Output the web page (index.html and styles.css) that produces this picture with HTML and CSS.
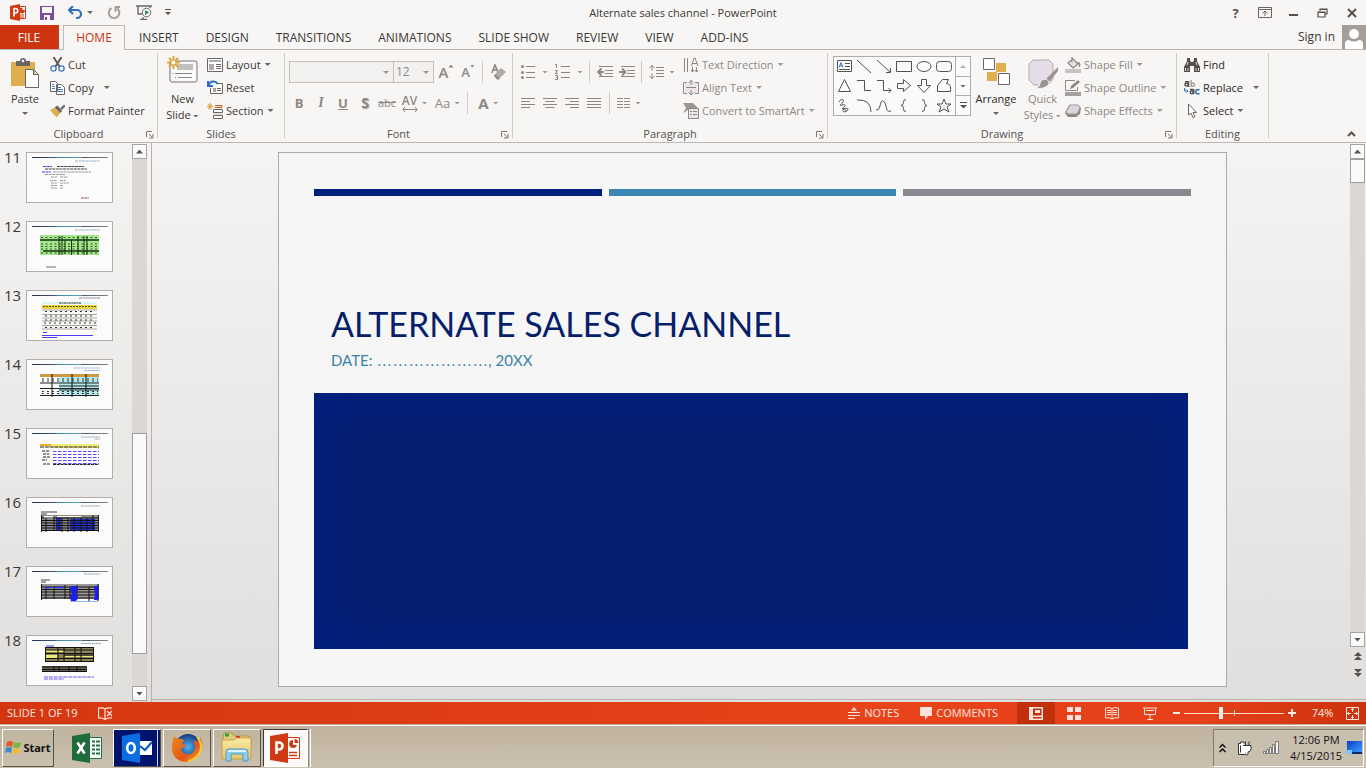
FILE: index.html
```html
<!DOCTYPE html>
<html lang="en">
<head>
<meta charset="utf-8">
<title>Alternate sales channel - PowerPoint</title>
<link rel="stylesheet" href="styles.css">
</head>
<body>
<svg class="defs" aria-hidden="true">
  <defs>
    <linearGradient id="rule" gradientUnits="userSpaceOnUse" x1="5" x2="81" y1="0" y2="0"><stop offset="0" stop-color="#2a2f45"/><stop offset=".3" stop-color="#3d5a78"/><stop offset=".34" stop-color="#3f88ac"/><stop offset=".64" stop-color="#5f9dba"/><stop offset=".67" stop-color="#555a60"/><stop offset="1" stop-color="#85858c"/></linearGradient>
    <radialGradient id="globe"><stop offset="0" stop-color="#4fb4e8"/><stop offset="1" stop-color="#123a86"/></radialGradient>
    <linearGradient id="fox" x1="0" y1="0" x2="1" y2="1"><stop offset="0" stop-color="#f08a1c"/><stop offset=".6" stop-color="#e2561a"/><stop offset="1" stop-color="#f9c12a"/></linearGradient>
    <linearGradient id="folder" x1="0" y1="0" x2="0" y2="1"><stop offset="0" stop-color="#f8eaa4"/><stop offset="1" stop-color="#e6c765"/></linearGradient>
    <linearGradient id="screen" x1="0" y1="0" x2="1" y2="1"><stop offset="0" stop-color="#0a3fc4"/><stop offset="1" stop-color="#3a9cff"/></linearGradient>
    <symbol id="launcher" viewBox="0 0 8 8"><path d="M.5 6V.5H6M3 3l3 3M7 3v4H3" fill="none" stroke="currentColor"/></symbol>
    <symbol id="lines" viewBox="0 0 14 12"><path d="M0 1.500h14M0 4.500h9M0 7.500h14M0 10.500h9" stroke="currentColor" fill="none"/></symbol>
    <symbol id="head" viewBox="0 0 85 49"><path fill="url(#rule)" d="M5 4h76v1H5z"/></symbol>
  </defs>
</svg>

<header class="titlebar">
  <div class="quick">
    <svg class="app" width="17" height="17" viewBox="0 0 17 17"><path fill="#fff" stroke="#cf3a14" d="M9 2.500h6.500v12H9z"/><path d="M12 4a2.500 2.500 0 1 0 2.500 2.500H12zM9 11h5M9 13h5" fill="#cf3a14" stroke="#cf3a14"/><path fill="#cf3a14" d="M0 2l10-2v17L0 15z"/><path d="M4 12.500v-8h1.500a2.200 2.200 0 0 1 0 4.500H4" fill="none" stroke="#fff" stroke-width="1.600"/></svg>
    <button class="q-save" aria-label="Save"><svg width="14" height="14" viewBox="0 0 14 14"><path fill="#7c4a9e" d="M0 0h14v14H0z"/><path fill="#f7f6f5" d="M2 1h10v6H2zM4 9h6v5H4z"/><path fill="#7c4a9e" d="M5 11h2v3H5z"/></svg></button>
    <button class="q-undo" aria-label="Undo"><svg width="15" height="13" viewBox="0 0 15 13"><path d="M5 0L1 4l4 4M1.500 4H9a4 4 0 0 1 0 8H8" fill="none" stroke="#2f6fc1" stroke-width="2.200"/></svg><i class="caret"></i></button>
    <button class="q-redo" aria-label="Repeat"><svg width="14" height="14" viewBox="0 0 14 14"><path d="M4.500 2.200A5.300 5.300 0 1 0 10 2.400" fill="none" stroke="#a39f9c" stroke-width="2"/><path d="M8.500 6V1H13" fill="none" stroke="#a39f9c" stroke-width="2"/></svg></button>
    <button class="q-show" aria-label="Start from beginning"><svg width="17" height="15" viewBox="0 0 17 15"><path d="M0 1h16M2 1v8h4M14 1v2M7 12v2M4 14.500h7" fill="none" stroke="#6b6866" stroke-width="1.400"/><circle cx="10.500" cy="7.500" r="4.300" fill="#f7f6f5" stroke="#6b6866"/><path fill="#2e8b57" d="M9 5l4 2.500L9 10z"/></svg></button>
    <button class="q-more" aria-label="Customize"><svg width="6" height="7" viewBox="0 0 6 7"><path d="M0 .5h6" stroke="#55514f"/><path d="M0 3h6L3 6z" fill="#55514f"/></svg></button>
  </div>
  <div class="doc-title">Alternate sales channel - PowerPoint</div>
  <div class="winbtns">
    <button aria-label="Help" class="help">?</button>
    <button aria-label="Ribbon display options"><svg width="14" height="11" viewBox="0 0 14 11"><path d="M.5.5h13v10H.5zM0 2.500h14M7 9V5M4.500 6.500L7 4l2.500 2.500" fill="none" stroke="#6a6664"/></svg></button>
    <button aria-label="Minimize"><svg width="10" height="10" viewBox="0 0 10 10"><path d="M0 7h9" stroke="#55514f" stroke-width="2"/></svg></button>
    <button aria-label="Restore"><svg width="11" height="10" viewBox="0 0 11 10"><path d="M3 3V1h7v5H8M1 4h7v5H1zM1 4.500h7M3 1.500h7" fill="none" stroke="#55514f" stroke-width="1.200"/></svg></button>
    <button aria-label="Close"><svg width="10" height="10" viewBox="0 0 10 10"><path d="M1 1l8 8M9 1L1 9" stroke="#55514f" stroke-width="2"/></svg></button>
  </div>
</header>

<nav class="tabs">
  <button class="file">FILE</button>
  <button class="active">HOME</button>
  <button>INSERT</button>
  <button>DESIGN</button>
  <button>TRANSITIONS</button>
  <button>ANIMATIONS</button>
  <button>SLIDE SHOW</button>
  <button>REVIEW</button>
  <button>VIEW</button>
  <button>ADD-INS</button>
  <a class="signin" href="#">Sign in
    <svg width="24" height="24" viewBox="0 0 24 24"><path fill="#a59d98" d="M0 0h24v24H0z"/><circle cx="12" cy="9" r="5" fill="#fff"/><path fill="#fff" d="M3 24v-5q0-4 4-4 5 3 10 0 4 0 4 4v5z"/></svg>
  </a>
</nav>

<section class="ribbon">
  <div class="group g-clip">
    <div class="gbody">
      <button class="big paste"><svg width="30" height="31" viewBox="0 0 30 31"><path fill="#dfae4e" d="M1 4h24v24H1z"/><path fill="#6a6664" d="M6 3h4a3 3 0 0 1 6 0h4v5H6z"/><circle cx="13" cy="3" r="1.300" fill="#fff"/><path fill="#fff" stroke="#6a6664" d="M15.500 11.500h8l5 5v13h-13zM23.500 11.500v5h5"/></svg><span>Paste</span><i class="caret"></i></button>
      <div class="rows">
        <button><svg width="15" height="15" viewBox="0 0 15 15"><path d="M3.500 0l6 9.500M11.500 0l-6 9.500" stroke="#5f5b59" stroke-width="2"/><circle cx="3.500" cy="11.500" r="2.600" fill="none" stroke="#3a78c3" stroke-width="1.300"/><circle cx="11.500" cy="11.500" r="2.600" fill="none" stroke="#3a78c3" stroke-width="1.300"/></svg>Cut</button>
        <button><svg width="15" height="14" viewBox="0 0 15 14"><path fill="#fff" stroke="#6a6664" d="M.5.5h5l2 2v8h-7zM6.500 3.500h5l3 3v7h-8z"/><path d="M2 3.500h2M2 5.500h3M2 7.500h3M8 6.500h3M8 8.500h5M8 10.500h5" stroke="#3a78c3"/></svg>Copy<i class="caret wide"></i></button>
        <button><svg width="15" height="14" viewBox="0 0 16 14"><path fill="#dfae4e" d="M0 6l6-3 5 6-4 5z"/><path fill="#6a6664" d="M5 3l3-2 5 6-2 2zM11 4l4-4 1.500 2-4 4z"/></svg>Format Painter</button>
      </div>
    </div>
    <div class="glabel">Clipboard<button aria-label="Clipboard options"><svg><use href="#launcher"/></svg></button></div>
  </div>

  <div class="group g-slides">
    <div class="gbody">
      <button class="big"><svg width="31" height="28" viewBox="0 0 31 28"><rect x="3" y="5" width="27" height="21" rx="2" fill="#fbfafa" stroke="#77716e"/><path fill="#c3bfbe" d="M10 8h16v6H10z"/><path d="M8 17.500h17M8 21.500h1M11 21.500h14M5.500 17.500h1" stroke="#8b8784"/><path d="M6.500 0v13M0 6.500h13M2 2l9 9M11 2l-9 9" stroke="#dca63c" stroke-width="2"/><circle cx="6.500" cy="6.500" r="2" fill="#fff"/></svg><span>New<br>Slide<i class="caret"></i></span></button>
      <div class="rows">
        <button><svg width="16" height="14" viewBox="0 0 16 14"><path d="M.5.5h15v13H.5z" fill="#fff" stroke="#6a6664"/><path fill="#8d8886" d="M2 2h12v2H2zM2 6h5v6H2z" opacity=".7"/><path d="M9 6.500h5M9 8.500h5M9 10.500h5" stroke="#6a6664"/></svg>Layout<i class="caret"></i></button>
        <button><svg width="16" height="15" viewBox="0 0 16 15"><path d="M4.500 13.500h11v-10h-5M3.500 8v5.500h2" fill="#fff" stroke="#6a6664"/><path d="M6 8h3v4H6z" fill="#a9a5a3"/><path d="M10 8.500h4M10 10.500h4" stroke="#6a6664"/><path d="M1 1v5h5M1.500 5.500C3 1 8 0 11 4" fill="none" stroke="#2f6fc1" stroke-width="2"/></svg>Reset</button>
        <button><svg width="16" height="16" viewBox="0 0 16 16"><path d="M3 0v7M0 3.500h6M1 1l4 5M5 1L1 6" stroke="#e0a03c"/><path d="M8 2.500h7v2H8" fill="none" stroke="#cf5a1c"/><path fill="#fff" stroke="#6a6664" d="M6.500 6.500h9v3h-9zM6.500 12.500h9v3h-9z"/><path d="M6 11h10" stroke="#c9c5c3"/></svg>Section<i class="caret"></i></button>
      </div>
    </div>
    <div class="glabel">Slides</div>
  </div>

  <div class="group g-font dim">
    <div class="gbody stack">
      <div class="line">
        <label class="combo face"><select aria-label="Font"><option></option></select></label>
        <label class="combo size"><select aria-label="Font size"><option>12</option></select></label>
        <button class="ib" aria-label="Increase font size"><span class="a1">A</span><i class="up"></i></button>
        <button class="ib" aria-label="Decrease font size"><span class="a2">A</span><i class="dn"></i></button>
        <i class="vsep"></i>
        <button class="ib clear" aria-label="Clear formatting"><svg width="15" height="16" viewBox="0 0 15 16"><path d="M1 9L4 1l3 7M2 6h4" fill="none" stroke="currentColor" stroke-width="1.600"/><path d="M4 10l6-6 5 4-6 6z" fill="#b0a9a6"/><path d="M4 10l5 4-1 1.500H6L3 12z" fill="#8d8783"/></svg></button>
      </div>
      <div class="line l2">
        <button class="ib"><b>B</b></button><button class="ib serif">I</button><button class="ib und"><b>U</b></button><button class="ib shad"><b>S</b></button><button class="ib abc">abc</button>
        <button class="ib w32"><span class="av">AV<svg width="16" height="5" viewBox="0 0 16 5"><path d="M1 2.500h14M3 0L.8 2.500 3 5M13 0l2.200 2.500L13 5" fill="none" stroke="currentColor"/></svg></span><i class="caret"></i></button>
        <button class="ib w32"><span>Aa</span><i class="caret"></i></button>
        <i class="vsep"></i>
        <button class="ib w32 fc"><b>A</b><i class="caret"></i></button>
      </div>
    </div>
    <div class="glabel">Font<button aria-label="Font options"><svg><use href="#launcher"/></svg></button></div>
  </div>

  <div class="group g-para dim">
    <div class="gbody">
      <div class="stack">
        <div class="line">
          <button class="ib w32" aria-label="Bullets"><svg width="14" height="14" viewBox="0 0 14 14"><path d="M5 1.500h9M5 7.500h9M5 12.500h9" stroke="currentColor"/><circle cx="1.500" cy="1.500" r="1.500" fill="currentColor"/><circle cx="1.500" cy="7.500" r="1.500" fill="currentColor"/><circle cx="1.500" cy="12.500" r="1.500" fill="currentColor"/></svg><i class="caret"></i></button>
          <button class="ib w32" aria-label="Numbering"><svg width="15" height="16" viewBox="0 0 15 16"><path d="M6 2.500h9M6 8.500h9M6 13.500h9M0 .5h1.500V4M0 6.500h2.500L.5 9.500H3M0 11.500h2.500v4H0M1 13.500h1" fill="none" stroke="currentColor"/></svg><i class="caret"></i></button>
          <i class="vsep"></i>
          <button class="ib" aria-label="Decrease indent"><svg width="16" height="12" viewBox="0 0 16 12"><path d="M2 .5h14M8 4.500h8M8 7.500h8M2 10.500h14" stroke="currentColor"/><path d="M4.500 2.500L1 6l3.500 3.500M1 6h6" fill="none" stroke="currentColor" stroke-width="1.800"/></svg></button>
          <button class="ib" aria-label="Increase indent"><svg width="16" height="12" viewBox="0 0 16 12"><path d="M2 .5h14M8 4.500h8M8 7.500h8M2 10.500h14" stroke="currentColor"/><path d="M3 2.500L6.500 6 3 9.500M0 6h6" fill="none" stroke="currentColor" stroke-width="1.800"/></svg></button>
          <i class="vsep"></i>
          <button class="ib w32" aria-label="Line spacing"><svg width="15" height="16" viewBox="0 0 15 16"><path d="M7 3.500h8M7 6.500h8M7 9.500h8M7 12.500h8M3 1v14M.5 4L3 1.500 5.500 4M.5 12L3 14.500 5.500 12" fill="none" stroke="currentColor"/><path d="M2 7h2v2H2z" fill="#f7f6f5"/></svg><i class="caret"></i></button>
        </div>
        <div class="line l2 aligns">
          <button class="ib" aria-label="Align left"><svg width="14" height="12"><use href="#lines"/></svg></button>
          <button class="ib" aria-label="Center"><svg width="14" height="12" viewBox="0 0 14 12"><path d="M0 1.500h14M2.500 4.500h9M0 7.500h14M2.500 10.500h9" stroke="currentColor"/></svg></button>
          <button class="ib" aria-label="Align right"><svg width="14" height="12" viewBox="0 0 14 12"><path d="M0 1.500h14M5 4.500h9M0 7.500h14M5 10.500h9" stroke="currentColor"/></svg></button>
          <button class="ib" aria-label="Justify"><svg width="14" height="12" viewBox="0 0 14 12"><path d="M0 1.500h14M0 4.500h14M0 7.500h14M0 10.500h14" stroke="currentColor"/></svg></button>
          <i class="vsep"></i>
          <button class="ib w32" aria-label="Columns"><svg width="13" height="12" viewBox="0 0 13 12"><path d="M0 1.500h6M7 1.500h6M0 4.500h6M7 4.500h6M0 7.500h6M7 7.500h6M0 10.500h6M7 10.500h6" stroke="currentColor"/></svg><i class="caret"></i></button>
        </div>
      </div>
      <div class="rows">
        <button><svg width="16" height="16" viewBox="0 0 16 16"><path d="M1.500 1v14M4.500 1v14M9.500 10v5M13.500 10v5M8 13l1.500 2 1.500-2M12 13l1.500 2 1.500-2M8.500 9l2.500-8h1l3 8M9 6.500h5" fill="none" stroke="currentColor"/></svg>Text Direction<i class="caret"></i></button>
        <button><svg width="16" height="16" viewBox="0 0 16 16"><path fill="#ece4ea" d="M2 3h12v10H2z"/><path d="M4 2.500H.5v11H4M12 2.500h3.500v11H12M3 7.500h10M8 0v5M8 10v5M5.500 3L8 .5 10.500 3M5.500 12.500L8 15l2.500-2.500" fill="none" stroke="currentColor"/></svg>Align Text<i class="caret"></i></button>
        <button><svg width="16" height="16" viewBox="0 0 16 16"><path d="M0 0h10l4 4v3H5l-5 3 3-5z" fill="#9d9794"/><path fill="#ece4ea" stroke="currentColor" d="M5.500 5.500h10v10h-10z"/><path d="M7 8.500h2M10 8.500h4M7 11.500h2M10 11.500h4" stroke="currentColor"/></svg>Convert to SmartArt<i class="caret"></i></button>
      </div>
    </div>
    <div class="glabel">Paragraph<button aria-label="Paragraph options"><svg><use href="#launcher"/></svg></button></div>
  </div>

  <div class="group g-draw">
    <div class="gbody">
      <div class="gallery">
        <div class="cells">
          <button aria-label="Text box"><svg viewBox="0 0 20 19"><path d="M3.500 3.500h14v11h-14zM11 6.500h5M11 9.500h5M5 12.500h11" fill="#fff"/><path d="M5 10.500l2-5 2 5M6 9h2" stroke="#2f6fc1"/></svg></button>
          <button aria-label="Line"><svg viewBox="0 0 20 19"><path d="M3 3l14 13"/></svg></button>
          <button aria-label="Arrow"><svg viewBox="0 0 20 19"><path d="M3 3l13 12M16.500 11v4.500H12"/></svg></button>
          <button aria-label="Rectangle"><svg viewBox="0 0 20 19"><path d="M2.500 4.500h15v10h-15z"/></svg></button>
          <button aria-label="Oval"><svg viewBox="0 0 20 19"><ellipse cx="10" cy="9.500" rx="7" ry="5"/></svg></button>
          <button aria-label="Rounded rectangle"><svg viewBox="0 0 20 19"><rect x="2.500" y="4.500" width="15" height="10" rx="3"/></svg></button>
          <button aria-label="Triangle"><svg viewBox="0 0 20 19"><path d="M10.500 3.500l6 12h-12z"/></svg></button>
          <button aria-label="Elbow"><svg viewBox="0 0 20 19"><path d="M3 4.500h7.500v10H17"/></svg></button>
          <button aria-label="Elbow arrow"><svg viewBox="0 0 20 19"><path d="M3 4.500h6.500v10H17M14.500 12l2.500 2.500-2.500 2.500"/></svg></button>
          <button aria-label="Right arrow"><svg viewBox="0 0 20 19"><path d="M3.500 7.500h6v-4l7 6-7 6v-3h-6z"/></svg></button>
          <button aria-label="Down arrow"><svg viewBox="0 0 20 19"><path d="M7.500 3.500h5v6h4l-6.500 7-6.500-7h4z"/></svg></button>
          <button aria-label="Freeform"><svg viewBox="0 0 20 19"><path d="M3.500 15.500v-6l5-6h6l-2 4q5 0 4 8z"/></svg></button>
          <button aria-label="Scribble"><svg viewBox="0 0 20 19"><path d="M5 6c2-4 6-3 4 0s-5 4-1 3 4 1 1 3 5-1 5 1-4 4-5 2 2-3 3 0"/></svg></button>
          <button aria-label="Arc"><svg viewBox="0 0 20 19"><path d="M3 4q14-1 14 12"/></svg></button>
          <button aria-label="Curve"><svg viewBox="0 0 20 19"><path d="M2 14q3 1 4-4c1-7 4-7 6 0 1 5 2 6 5 5"/></svg></button>
          <button aria-label="Left brace"><svg viewBox="0 0 20 19"><path d="M12 3.500q-3 0-2.500 3 0 3-2.500 3 2.500 0 2.500 3-.5 3 2.500 3"/></svg></button>
          <button aria-label="Right brace"><svg viewBox="0 0 20 19"><path d="M8 3.500q3 0 2.500 3 0 3 2.500 3-2.500 0-2.500 3 .5 3-2.500 3"/></svg></button>
          <button aria-label="Star"><svg viewBox="0 0 20 19"><path d="M10 3l2 5h5l-4 3 2 5-5-3-5 3 2-5-4-3h5z"/></svg></button>
        </div>
        <div class="gscroll">
          <button aria-label="Scroll up"><i class="caret flip"></i></button>
          <button aria-label="Scroll down"><i class="caret"></i></button>
          <button aria-label="More shapes"><svg width="7" height="7" viewBox="0 0 7 7"><path d="M0 .5h7" stroke="#55514f"/><path d="M0 3h7L3.500 6.500z" fill="#55514f"/></svg></button>
        </div>
      </div>
      <button class="big arrange"><svg width="27" height="28" viewBox="0 0 27 28"><path fill="#dfae4e" d="M13 5h10v9h-9v9H4v-9h9z"/><path fill="#fff" stroke="#6a6664" d="M.5.5h11v11H.5zM15.500 15.500h11v11h-11z"/></svg><span>Arrange</span><i class="caret"></i></button>
      <button class="big quick-styles off"><svg width="30" height="30" viewBox="0 0 30 30"><path d="M5 1h16l4 4v15l-5 6H6l-5-5V5z" fill="#e6dce8" stroke="#b3aab2"/><path d="M30 8L18 20l3 3 9-11z" fill="#9a9491"/><path d="M16 20q5 0 5 5-5 6-13 4 5-2 4-5 0-3 4-4z" fill="#9a9491" stroke="#f7f6f5"/></svg><span>Quick<br>Styles<i class="caret"></i></span></button>
      <div class="rows off">
        <button><svg width="16" height="16" viewBox="0 0 16 16"><path fill="#c9c2c6" d="M0 12h16v4H0z"/><path d="M3 6l5-4 5 5-5 4zM7 0v5M13 5q3 2 1 5" fill="#eadfe6" stroke="currentColor" stroke-width="1.300"/></svg>Shape Fill<i class="caret"></i></button>
        <button><svg width="16" height="16" viewBox="0 0 16 16"><path fill="#a79ea2" d="M0 12h16v4H0z"/><path d="M10 .5H.5v10h12V7" fill="none" stroke="currentColor"/><path d="M5 9l1-3 7-6 2 2-7 6z" fill="currentColor"/></svg>Shape Outline<i class="caret"></i></button>
        <button><svg width="16" height="14" viewBox="0 0 16 14"><path d="M4 1h9l3 3-1 6-4 3H3L0 9z" fill="#8d8783"/><path d="M5 1h8l2 3-3 6H3L1 8z" fill="#ded4dc" stroke="#9d9794"/></svg>Shape Effects<i class="caret"></i></button>
      </div>
    </div>
    <div class="glabel">Drawing<button class="off" aria-label="Drawing options"><svg><use href="#launcher"/></svg></button></div>
  </div>

  <div class="group g-edit">
    <div class="gbody">
      <div class="rows">
        <button><svg width="16" height="14" viewBox="0 0 16 14"><path fill="#55504a" d="M3 0h3v2l1 2h2l1-2V0h3v3l3 6v5h-6V8H6v6H0V9l3-6z"/><path d="M1.500 10v3M4 10v3M12 10v3M14.500 10v3M4 4L3 7M12 4l1 3" stroke="#f7f6f5" stroke-width=".8"/></svg>Find</button>
        <button><svg width="16" height="15" viewBox="0 0 16 15"><g fill="none" stroke-width="1.500"><circle cx="2.500" cy="4.500" r="1.600" stroke="#55514f"/><path d="M1 1.800h3.500V7M9.700 9.200v5M6 9.500h3.500" stroke="#55514f"/><circle cx="7.700" cy="12.200" r="1.500" stroke="#55514f"/><path d="M7.200 0v7" stroke="#aaa5a2"/><circle cx="9" cy="4.700" r="1.600" stroke="#aaa5a2"/><path d="M15.500 10.200a2.200 2.200 0 1 0 0 3" stroke="#2f6fc1"/></g><path d="M.5 8v3H4M2.500 9.500L4 11l-1.500 1.500" fill="none" stroke="#2f6fc1"/></svg>Replace<i class="caret wide"></i></button>
        <button><svg width="16" height="15" viewBox="0 0 16 15"><path d="M4.500 1v11l2.500-2 2 4.500 2-1-2-4h3.500z" fill="#fff" stroke="#6a6664"/></svg>Select<i class="caret"></i></button>
      </div>
    </div>
    <div class="glabel">Editing</div>
  </div>
  <button class="collapse" aria-label="Collapse the ribbon"><svg width="9" height="6" viewBox="0 0 9 6"><path d="M1 5l3.500-3.500L8 5" fill="none" stroke="#55514f" stroke-width="2"/></svg></button>
</section>

<main class="work">
  <aside class="panel">
    <ol class="thumbs">
      <li><span>11</span><svg viewBox="0 0 85 49"><use href="#head"/><g fill="none" stroke-dasharray="3 .6"><path d="M48 8h25" stroke="#8fb4c8"/><path d="M16 13.500h9M15 19h9" stroke="#4a3cf0"/><path d="M30 13.500h27M18 16h42" stroke="#444"/><path d="M26 19h38M18 21.500h20" stroke="#999"/><path d="M24 24h6M23 27.500h7M24 30h6M24 32.500h6M24 35h6M33 24h8M33 27.500h6M33 30h9M33 32.500h3M33 35h3" stroke="#888" stroke-width=".8"/><path d="M54 45h8" stroke="#8a5050"/></g></svg></li>
      <li><span>12</span><svg viewBox="0 0 85 49"><use href="#head"/><path d="M48 8h25" stroke="#8fb4c8" stroke-dasharray="3 .6"/><path fill="#a4e68c" d="M13 13h59v20H13z"/><path d="M13 18h59M16 29h56" stroke="#143010" stroke-width="1.600"/><path d="M32 14v19M35 14v19M38 18v14M44.500 18v15M51 14v19M57 14v19M60 14v19" stroke="#143010"/><path d="M14 15.500h58M14 22h58M14 24.500h58M14 27h58M14 31h58" stroke="#24461b" stroke-dasharray="2 2.500" stroke-width=".9"/><path d="M19 45h10" stroke="#777"/></svg></li>
      <li><span>13</span><svg viewBox="0 0 85 49"><use href="#head"/><path d="M52 7h21" stroke="#889" stroke-dasharray="3 .6"/><path fill="#d9f5ef" d="M15 11h55v2H15z"/><path d="M32 12h22" stroke="#333" stroke-dasharray="2 .5"/><path fill="#e8d73e" d="M15 14h55v4H15z"/><path d="M16 15.500h54" stroke="#5a5010" stroke-dasharray="2 1"/><path d="M15 19h55M15 23.500h55M15 27h55M15 30h55M15 34.500h55M15 38h55" stroke="#aaa49a"/><path d="M18 20.500h50M18 25h50M18 29h50M17 32h52M18 36.500h50" stroke="#333" stroke-dasharray="2 3"/><path d="M16 41.500h4M15 44.500h51M15 46.500h15" stroke="#4a3cf0"/></svg></li>
      <li><span>14</span><svg viewBox="0 0 85 49"><use href="#head"/><path d="M47 8h26M57 10.500h16" stroke="#9ab6cf" stroke-dasharray="3 .6"/><path fill="#b5e9ec" d="M32 17h40v19H32z"/><path fill="#cf9a3e" d="M13 14h59v3H13z"/><path d="M13 23h59M13 28.500h59M32 26h40M13 35.500h59M32 30h40" stroke="#1c2424"/><path d="M25 14v23M45 14v23M59 14v23" stroke="#111"/><path d="M15 19h56M15 21h56M15 31.500h56M15 33.500h56" stroke="#333" stroke-dasharray="2 3"/></svg></li>
      <li><span>15</span><svg viewBox="0 0 85 49"><use href="#head"/><path d="M54 8h19M68 10h5" stroke="#9aa9b4" stroke-dasharray="3 .6"/><path fill="#f0ad2a" d="M13 15h11v2H13z"/><path fill="#f4ec7a" d="M24 15h48v4H24z"/><path d="M13 18h59" stroke="#222" stroke-dasharray="4 .8"/><path d="M26 22.500h46M26 25.500h46M26 28.500h46M26 31.500h46M26 34.500h46" stroke="#5a46f4" stroke-dasharray="3.500 1.500"/><path d="M15 22h8M16 25h6M16 28h7M15 31h5M16 35h7M26 35.500h46" stroke="#222" stroke-dasharray="3 .8"/></svg></li>
      <li><span>16</span><svg viewBox="0 0 85 49"><use href="#head"/><path d="M54 8h19" stroke="#9aa9b4" stroke-dasharray="3 .6"/><path d="M14 14h16M14 16h6" stroke="#444"/><path fill="#8d8a86" d="M14 17h58v16H14z"/><path fill="#fff" d="M17 18h9v3h-9zM30 18h24v1H30z"/><path fill="#2330c8" d="M29 20h5v13h-5zM43 21h25v12H43z"/><path d="M14 20h58M14 22.500h58M14 25h58M14 27.500h58M14 30h58M14 32.500h58" stroke="#111"/><path d="M14.500 17v17M19 20v14M27 20v12M35 20v14M41 20v14M47 20v14M54 20v14M60 20v14M66 17v16M71.500 17v17" stroke="#111" stroke-width=".9"/></svg></li>
      <li><span>17</span><svg viewBox="0 0 85 49"><use href="#head"/><path d="M57 7h16" stroke="#9aa9b4" stroke-dasharray="3 .6"/><path d="M14 13h9M14 15h5" stroke="#444"/><path fill="#9a9794" d="M14 17h58v15H14z"/><path d="M14 20h58M14 22.500h58M14 25h58M14 28h58M14 31h58" stroke="#111"/><path d="M14.500 17v16M19 20v12M27 20v12M38 18v14M43 20v12M50 18v14M62 20v14M71 17v17" stroke="#111"/><path d="M18 20.500h6M28 20.500h9" stroke="#2a2af0" stroke-width="1.300"/><path fill="#1a1ef0" d="M44 19h5l2 3-2 3 1 4 1 2-2 3h-5l-1-4 2-4-2-4zM67 19h4v14h-4l1-5z"/><path d="M43 34.500h28" stroke="#8db4f0"/></svg></li>
      <li><span>18</span><svg viewBox="0 0 85 49"><use href="#head"/><path d="M54 7.500h20" stroke="#9aa9b4" stroke-dasharray="3 .6"/><path d="M19 10h8" stroke="#4a3cf0"/><path fill="#8b8458" d="M18 11h49v15H18z"/><path fill="#f1e878" d="M19 19h11v3H19zM19 14h18v2H19zM38 20h28v1H38z"/><path d="M18 11.500h49M18 14h49M18 17.500h49M18 22.500h49M37 19h30M18 25.500h49" stroke="#111"/><path d="M18.500 11v15M31 11v15M37 11v15M48 11v15M54 11v15M66.500 11v15" stroke="#111"/><path fill="#6d6355" d="M15 30h45v6H15z"/><path d="M15 31h45M15 33.500h45M15 35.500h45" stroke="#111"/><path d="M27 30v6M32 30v6M42 30v6M50 30v6" stroke="#111"/><path d="M17 41h50M17 43h20" stroke="#6c5cf4" stroke-dasharray="4 .8"/></svg></li>
    </ol>
    <div class="scroll left-scroll">
      <button aria-label="Scroll up"><i class="tri up3"></i></button>
      <div class="track"><div class="before"></div><div class="handle"></div><div class="after"></div></div>
      <button aria-label="Scroll down"><i class="tri"></i></button>
    </div>
  </aside>
  <section class="canvas">
    <article class="slide">
      <div class="bars"><i></i><i></i><i></i></div>
      <div class="heading">
        <h1>ALTERNATE SALES CHANNEL</h1>
        <p>DATE: <span>…………………</span>, 20XX</p>
      </div>
      <div class="block"></div>
    </article>
    <div class="scroll right-scroll">
      <button aria-label="Previous"><i class="tri up3"></i></button>
      <div class="track"><div class="handle"></div></div>
      <button aria-label="Next"><i class="tri"></i></button>
      <button class="plain" aria-label="Previous slide"><svg width="8" height="8" viewBox="0 0 8 8"><path d="M4 0l4 4H0zM4 4l4 4H0z" fill="#55514f"/></svg></button>
      <button class="plain" aria-label="Next slide"><svg width="8" height="8" viewBox="0 0 8 8"><path d="M4 4l4-4H0zM4 8l4-4H0z" fill="#55514f"/></svg></button>
    </div>
  </section>
</main>

<footer class="status">
  <span class="count">SLIDE 1 OF 19</span>
  <button class="proof" aria-label="Spelling"><svg width="15" height="13" viewBox="0 0 15 13"><path d="M8 2Q4 .5.500 1v10Q4 10.500 7 12.500V2M7 2q2-1.500 7-1M7 12.500q3-2 7-1.500M9 4l5 5M14 4L9 9" fill="none" stroke="#ffe3d8" stroke-width="1.200"/></svg></button>
  <div class="sright">
    <button class="notes"><svg width="12" height="12" viewBox="0 0 12 12"><path d="M0 5.500h12M0 8.500h12M0 11.500h7" stroke="#ffe3d8"/><path fill="#ffe3d8" d="M6 0l3 3.500H3z"/></svg>NOTES</button>
    <button class="comments"><svg width="12" height="13" viewBox="0 0 12 13"><path fill="#ffe3d8" d="M0 0h12v9H8l-3 4V9H0z"/></svg>COMMENTS</button>
    <button class="view on" aria-label="Normal"><svg width="14" height="13" viewBox="0 0 14 13"><path d="M0 0h14v13H0z" fill="#ffe3d8"/><path d="M4 1.500h8.500v7H4zM4 10h8.500v1.500H4z" fill="#c22f0c"/><path d="M6 3h5v3H6z" fill="#ffe3d8"/></svg></button>
    <button class="view" aria-label="Slide sorter"><svg width="14" height="13" viewBox="0 0 14 13"><path fill="#ffe3d8" d="M0 0h6v5H0zM8 0h6v5H8zM0 8h6v5H0zM8 8h6v5H8z"/></svg></button>
    <button class="view" aria-label="Reading view"><svg width="14" height="13" viewBox="0 0 14 13"><path d="M.5 1q4-1 6.500.5Q9.500 0 13.500 1v10Q9.500 10 7 12 4.500 10 .5 11zM7 1v11M2 3.500h4M2 5.500h4M2 7.500h4M8 3.500h4M8 5.500h4M8 7.500h4" fill="none" stroke="#ffe3d8"/></svg></button>
    <button class="view" aria-label="Slide show"><svg width="14" height="13" viewBox="0 0 14 13"><path d="M0 1h14M1.500 1v6.500h11V1M3 3.500h8M7 8v4M4 12.500h6" fill="none" stroke="#ffe3d8"/></svg></button>
    <button class="zbtn" aria-label="Zoom out"><svg width="7" height="10" viewBox="0 0 7 10"><path d="M0 5h7" stroke="#ffe9e0" stroke-width="2"/></svg></button>
    <input type="range" class="zoom" aria-label="Zoom" min="0" max="100" value="36">
    <button class="zbtn" aria-label="Zoom in"><svg width="8" height="8" viewBox="0 0 8 8"><path d="M0 4h8M4 0v8" stroke="#ffe9e0" stroke-width="2"/></svg></button>
    <span class="pct">74%</span>
    <button class="fit" aria-label="Fit slide to window"><svg width="13" height="13" viewBox="0 0 13 13"><path d="M.5.5h12v12H.5zM6.500 1v4M6.500 8v4M1 6.500h4M8 6.500h4M5 3l1.500-1.500L8 3M5 10l1.500 1.500L8 10M3 5L1.500 6.500 3 8M10 5l1.500 1.500L10 8" fill="none" stroke="#ffe3d8"/></svg></button>
  </div>
</footer>

<div class="taskbar">
  <button class="start"><svg width="17" height="17" viewBox="0 0 17 17"><path fill="#e5532a" d="M2 3q3-2 6 0L7 8Q4 6 1 8z"/><path fill="#7db53c" d="M9 3q3 2 7 0l-1 5q-4 2-7 0z"/><path fill="#3f86d0" d="M1 9q3-2 6 0l-1 5Q3 12 0 14z"/><path fill="#f2bc34" d="M8 9q3 2 7 0l-1 5q-4 2-7 0z"/></svg>Start</button>
  <button class="task flat" aria-label="Excel"><svg width="31" height="30" viewBox="0 0 31 30"><path fill="#fff" stroke="#1e7145" d="M17 4.500h12.500v21H17z"/><path d="M20 8.500h8M20 12.500h8M20 16.500h8M20 20.500h8" stroke="#1e7145" stroke-width="2.200"/><path d="M23.500 6v18" stroke="#fff"/><path fill="#1e6b3c" d="M0 3l18-3v30L0 27z"/><path d="M5.500 9.500l7 11M12.500 9.500l-7 11" stroke="#fff" stroke-width="2.600"/></svg></button>
  <button class="task outlook" aria-label="Outlook"><svg width="31" height="30" viewBox="0 0 31 30"><path fill="#fff" d="M17 8h13v14H17z"/><path d="M18 13l5 4 7-8" fill="none" stroke="#0a56c4" stroke-width="2"/><path fill="#0b6ee0" d="M0 3l18-3v30L0 27z"/><ellipse cx="9" cy="15" rx="3.800" ry="5" fill="none" stroke="#fff" stroke-width="2.600"/></svg></button>
  <button class="task" aria-label="Firefox"><svg width="32" height="30" viewBox="0 0 32 30"><circle cx="17" cy="14" r="13" fill="url(#globe)"/><path fill="url(#fox)" d="M3 3q2 3 5 3 4-1 5 2-2 1-2 3l4 1q-1 3-5 3 0 5 5 6 6 1 8-3 3-5-1-11 8 4 7-3 5 9-1 18-6 8-15 7Q1 26 1 15 1 8 3 3z"/><path d="M26 4q6 7 3 15-4 8-12 9" fill="none" stroke="#f9cb3a" stroke-width="2"/></svg></button>
  <button class="task" aria-label="File Explorer"><svg width="32" height="31" viewBox="0 0 32 31"><path d="M3 1h8l2 3h15l2 3v6H1z" fill="#e4cc78" stroke="#b8943c"/><path d="M4 3h4" stroke="#2ea043" stroke-width="3"/><path d="M15 5h4" stroke="#d33" stroke-width="2"/><path d="M1 8h12l2-2h15v21H1z" fill="url(#folder)" stroke="#c5a04a"/><path d="M5 29V20q0-3 3-3h16q3 0 3 3v9h-5v-7H10v7z" fill="#8fcdee" stroke="#4c9cc9"/><path d="M7 19h18" stroke="#dff4ff" stroke-width="2"/></svg></button>
  <button class="task pressed" aria-label="PowerPoint"><svg width="31" height="30" viewBox="0 0 31 30"><path fill="#fff" stroke="#cf3a14" d="M17 4.500h12.500v21H17z"/><path fill="#cf3a14" d="M23 7a4 4 0 1 0 4 5h-4z"/><path fill="#cf3a14" d="M24.500 6v4h4q-.5-4-4-4z"/><path d="M19 19.500h8M19 22.500h8" stroke="#cf3a14" stroke-width="1.500"/><path fill="#cf3a14" d="M0 3l18-3v30L0 27z"/><path d="M6.500 21V9.500H9a3.300 3.300 0 0 1 0 7H6.500" fill="none" stroke="#fff" stroke-width="2.600"/></svg></button>
  <div class="tray">
    <svg width="7" height="10" viewBox="0 0 7 10"><path d="M.5 4.500l3-3 3 3M.5 9l3-3 3 3" fill="none" stroke="#111" stroke-width="1.500"/></svg>
    <svg width="15" height="16" viewBox="0 0 15 16"><path d="M7 3.500V2H3.500v1.500h-2v11h7V12" fill="#fff" stroke="#333"/><path d="M6 5.500h8V9q0 2.500-3 3v2q0 1-2 1" fill="#fff" stroke="#333"/><path d="M8.500 1.500v4M12 1.500v4M3.500 5.500v7" stroke="#333"/></svg>
    <svg width="16" height="13" viewBox="0 0 16 13"><path fill="#f4f2ee" stroke="#666" stroke-width=".8" d="M.5 10.500h2v2h-2zM3.500 8.500h2v4h-2zM6.500 6.500h2v6h-2zM9.500 3.500h2v9h-2zM12.500.5h3v12h-3z"/></svg>
    <time>12:06 PM<br>4/15/2015</time>
    <svg width="16" height="14" viewBox="0 0 16 14"><path fill="url(#screen)" d="M1 0h15v11H1z"/><path fill="#0a2a66" d="M1 11h15v2H1z"/><path fill="#7cc6ff" d="M0 9h6v4H0z"/></svg>
  </div>
</div>
</body>
</html>
```

FILE: styles.css
```css
* { box-sizing: border-box; }
html, body { height: 100%; }
body {
  margin: 0;
  display: flex;
  flex-direction: column;
  overflow: hidden;
  background: #f7f6f5;
  color: #3b3836;
  font: 12px/16px "Open Sans", "Noto Sans", sans-serif;
}
button, select, input { font: inherit; color: inherit; margin: 0; }
button {
  display: inline-flex;
  align-items: center;
  justify-content: center;
  padding: 0;
  border: 0;
  background: none;
  white-space: nowrap;
}
svg { display: block; flex: none; }
.defs { position: absolute; width: 0; height: 0; }

.caret {
  flex: none;
  display: inline-block;
  width: 6px;
  height: 3px;
  margin-left: 4px;
  background: #6a6664;
  clip-path: polygon(0 0, 100% 0, 50% 100%);
  vertical-align: middle;
}
.caret.flip { transform: rotate(180deg); opacity: .5; }

/* title bar */
.titlebar {
  flex: none;
  display: grid;
  grid-template-columns: 1fr auto 1fr;
  align-items: center;
  height: 25px;
}
.doc-title { font-size: 11px; }
.quick { display: flex; align-items: center; padding-left: 10px; }
.q-save { margin-left: 13px; }
.q-undo { margin-left: 14px; }
.q-undo .caret { margin-left: 4px; }
.q-redo { margin-left: 14px; }
.q-show { margin-left: 15px; }
.q-more { margin-left: 12px; }
.winbtns { display: flex; justify-content: flex-end; }
.winbtns button { width: 29px; height: 22px; }
.help { font-weight: 700; font-size: 13px; color: #55514f; }

/* ribbon tabs */
.tabs {
  flex: none;
  display: flex;
  height: 25px;
  border-bottom: 1px solid #bcb7b3;
}
.tabs button { padding: 1px 14px 0 13px; }
.tabs .file { width: 59px; background: #cc3510; color: #fff; }
.tabs .active {
  width: 62px;
  height: 25px;
  margin: 0 1px 0 4px;
  padding: 0;
  border: 1px solid #bcb7b3;
  border-bottom: 0;
  background: #f7f6f5;
  color: #cc3510;
}
.signin {
  display: flex;
  align-items: center;
  gap: 7px;
  margin-left: auto;
  color: inherit;
  text-decoration: none;
}

/* ribbon */
.ribbon {
  flex: none;
  display: flex;
  padding-top: 3px;
  border-bottom: 1px solid #bcb7b3;
}
.group {
  flex: none;
  display: flex;
  flex-direction: column;
  padding-right: 1px;
  background: linear-gradient(#cfcbc8, #cfcbc8) 100% 0 / 1px calc(100% - 4px) no-repeat;
}
.g-clip { width: 158px; }
.g-slides { width: 127px; }
.g-font { width: 228px; }
.g-para { width: 315px; }
.g-draw { width: 349px; }
.g-edit { width: 92px; }
.gbody { display: flex; height: 69px; }
.glabel {
  display: flex;
  align-items: center;
  justify-content: center;
  height: 20px;
  padding: 3px 0 0;
  color: #55514f;
  font-size: 11px;
}
.glabel button { margin-left: auto; padding: 2px 3px 0 0; }
.glabel:has(button)::before { content: ""; margin-right: auto; }
.glabel svg { width: 8px; height: 8px; color: #7c7774; }
.rows { display: flex; flex-direction: column; font-size: 11px; }
.rows button { height: 23px; justify-content: flex-start; gap: 3px; }
.rows .caret { margin-left: 1px; }
.rows .caret.wide { margin-left: 7px; }
.big { flex-direction: column; justify-content: flex-start; padding-top: 3px; font-size: 11px; line-height: 16px; }
.big > svg { margin-bottom: 4px; }
.big > .caret { margin: 5px 0 0; }
.big span .caret { margin-left: 2px; }
.dim, .off { color: #8d8783; }
.dim .caret, .off .caret { background: #a09a96; }
.dim .glabel { color: #55514f; }

.glabel:has(button) { padding-left: 11px; }
.paste { width: 50px; padding-top: 5px; }
.paste > svg { margin-bottom: 2px; }
.g-slides .big { width: 49px; padding-left: 0; }
.g-slides .big > svg { margin-bottom: 7px; }

.stack { display: flex; flex-direction: column; }
.line { display: flex; align-items: center; height: 22px; margin-top: 8px; }
.line.l2 { margin-top: 8px; height: 24px; }
.g-font .line { padding-left: 4px; }
.combo { position: relative; display: flex; height: 22px; border: 1px solid #c3bfbc; background: #f3f1f0; }
.combo::after {
  content: "";
  position: absolute;
  right: 4px;
  top: 9px;
  width: 6px;
  height: 3px;
  background: #a09a96;
  clip-path: polygon(0 0, 100% 0, 50% 100%);
}
.combo select { width: 100%; appearance: none; border: 0; padding: 0 0 0 2px; background: none; }
.face { width: 105px; }
.size { width: 40px; border-left: 0; margin-right: 1px; }
.ib { width: 22px; height: 22px; flex: none; font-size: 13px; }
.w32 { width: 33px; }
.vsep { width: 1px; height: 22px; margin: 0 4px 0 3px; background: #cfcbc8; }
.a1 { font-size: 15px; font-weight: 600; }
.a2 { font-size: 13px; font-weight: 600; }
.up, .dn { width: 5px; height: 3px; margin-bottom: 12px; background: currentColor; clip-path: polygon(0 100%, 100% 100%, 50% 0); }
.dn { clip-path: polygon(0 0, 100% 0, 50% 100%); }
.serif { font: italic bold 14px "Liberation Serif", serif; }
.und { text-decoration: underline; }
.shad { text-shadow: 1px 1px 1px #aaa4a0; font-size: 14px; }
.abc { font-size: 11px; text-decoration: line-through; }
.av { line-height: 12px; font-size: 12px; font-weight: 600; }
.g-font .line.l2 { padding-left: 3px; }
.fc { font-size: 15px; }
.g-para .stack { width: 170px; padding-left: 5px; }
.g-para .w32 { width: 34px; justify-content: flex-start; padding-left: 3px; }
.g-para .w32 .caret { margin-left: 7px; }
.g-para .vsep + .w32 .caret { margin-left: 5px; }
.aligns .ib { justify-content: flex-start; padding-left: 3px; }

.gallery { display: flex; width: 138px; height: 60px; margin: 3px 0 0 5px; border: 1px solid #b1acaa; background: #fbfafa; }
.cells { flex: 1; display: grid; grid-template-columns: repeat(6, 20px); }
.cells svg { width: 20px; height: 19px; fill: none; stroke: #55514f; stroke-width: 1; }
.gscroll { display: flex; flex-direction: column; width: 15px; border-left: 1px solid #b1acaa; }
.gscroll button { flex: 1; }
.gscroll button + button { border-top: 1px solid #b1acaa; }
.gscroll .caret { margin: 0; }
.arrange { width: 50px; padding-top: 5px; color: #2b2826; }
.arrange > svg { margin-bottom: 5px; }
.quick-styles { width: 43px; padding-top: 6px; margin-right: 1px; }
.quick-styles > svg { margin-bottom: 2px; }
.g-edit .rows { padding-left: 7px; color: #2b2826; }
.collapse { align-self: flex-end; margin: 0 10px 5px auto; }

/* workspace */
.work {
  flex: 1;
  min-height: 0;
  display: flex;
  background: linear-gradient(#f5f4f3, #e1dfdd);
}
.panel { flex: none; display: flex; width: 152px; border-right: 1px solid #b5b1ae; }
.thumbs {
  flex: 1;
  margin: 0;
  padding: 9px 0 0 4px;
  list-style: none;
  overflow: hidden;
}
.thumbs li { display: flex; height: 69px; font-size: 15px; line-height: 11px; }
.thumbs span { width: 22px; }
.thumbs svg { width: 87px; height: 51px; border: 1px solid #b1adab; background: #fcfbfb; }
.scroll { flex: none; display: flex; flex-direction: column; width: 15px; }
.scroll button { height: 15px; border: 1px solid #a8a4a1; background: #fbfafa; }
.track { flex: 1; display: flex; flex-direction: column; background: #dbd7d5; }
.handle { border: 1px solid #a09c9a; background: #fbfafa; }
.tri { width: 7px; height: 4px; background: #55514f; clip-path: polygon(0 0, 100% 0, 50% 100%); }
.up3 { clip-path: polygon(0 100%, 100% 100%, 50% 0); }
.left-scroll { margin: 1px 4px 1px 0; }
.before { flex: 276; }
.left-scroll .handle { flex: 220; }
.after { flex: 32; }
.canvas { flex: 1; display: flex; margin-bottom: 2px; padding-top: 1px; border-bottom: 1px solid #b5b1ae; }
.right-scroll { margin-right: 1px; }
.right-scroll .handle { height: 24px; }
.right-scroll .plain { height: 17px; border: 0; background: none; }
.right-scroll .plain:last-child { margin-bottom: 18px; }

.slide {
  flex: 1;
  display: flex;
  flex-direction: column;
  margin: 8px 123px 12px 126px;
  padding: 36px 35px 37px;
  border: 1px solid #aeaaa8;
  background: #f7f6f6;
}
.bars { flex: none; display: flex; gap: 7px; height: 7px; }
.bars i { flex: 1; background: #00207c; }
.bars i:nth-child(2) { background: #3a86b2; }
.bars i:nth-child(3) { background: #89878f; }
.heading { flex: 10; display: flex; flex-direction: column; justify-content: flex-end; padding: 0 17px; }
.heading h1 { margin: 0 0 4px; font: 34px/44px Lato, sans-serif; color: #061f6b; }
.heading p { margin: 0 0 23px; font: 15px/20px Lato, sans-serif; color: #3a82a8; }
.heading p span { font: 16px/16px "Liberation Sans", sans-serif; }
.block { flex: 13; margin-right: 3px; background: #061f70; box-shadow: inset 0 0 44px 12px #00207f; }

/* status bar */
.status {
  flex: none;
  display: flex;
  align-items: center;
  height: 22px;
  padding-left: 7px;
  background: linear-gradient(90deg, #d43710, #e8431b 65%, #e5401a 88%, #cc320d);
  color: #ffe9e0;
  font-size: 11px;
}
.proof { margin-left: 20px; }
.sright { display: flex; align-items: center; height: 22px; margin-left: auto; padding-right: 7px; }
.notes { gap: 4px; margin-right: 21px; }
.comments { gap: 4px; margin-right: 19px; }
.view { width: 38px; height: 22px; }
.on { background: #c22f0c; }
.zbtn { width: 15px; }
.zoom {
  width: 100px;
  height: 14px;
  appearance: none;
  background: linear-gradient(#ffd9cc, #ffd9cc) 50% 50% / 1px 6px no-repeat, linear-gradient(#ffd9cc, #ffd9cc) 50% 50% / 100% 1px no-repeat;
}
.zoom::-webkit-slider-thumb { appearance: none; width: 4px; height: 12px; background: #fff1ea; }
.pct { width: 47px; text-align: center; }

/* taskbar */
.taskbar {
  flex: none;
  display: flex;
  align-items: center;
  gap: 2px;
  height: 44px;
  padding: 3px 2px 1px;
  border-top: 1px solid #b9ae9d;
  box-shadow: inset 0 1px #fff;
  background: linear-gradient(#bfb39f, #cbc0ae);
  color: #111;
}
.start, .task { height: 38px; border: 1px solid; border-color: #fff #55504a #55504a #fff; }
.start { width: 52px; gap: 1px; font: bold 11px/16px "Open Sans", sans-serif; }
.task { width: 48px; }
.flat { width: 55px; border-color: transparent; padding-left: 8px; }
.outlook { background: #00146e; box-shadow: inset -2px 0 #00146e, inset -3px 0 #d8d2c6; }
.pressed { width: 45px; background: #fbf9f7; border-color: #3f3a35 #fff #fff #3f3a35; box-shadow: 1px 0 #8d8579, 2px 0 #c9bfae, 3px 0 #fff; }
.tray {
  display: flex;
  align-items: center;
  gap: 11px;
  height: 38px;
  margin-left: auto;
  padding: 0 1px 0 5px;
  border: 1px solid;
  border-color: #857c6f #fff #fff #857c6f;
  background: #c9bfae;
}
.tray time { text-align: center; font-size: 11px; }
.tray time + svg { margin-left: -7px; }
```
